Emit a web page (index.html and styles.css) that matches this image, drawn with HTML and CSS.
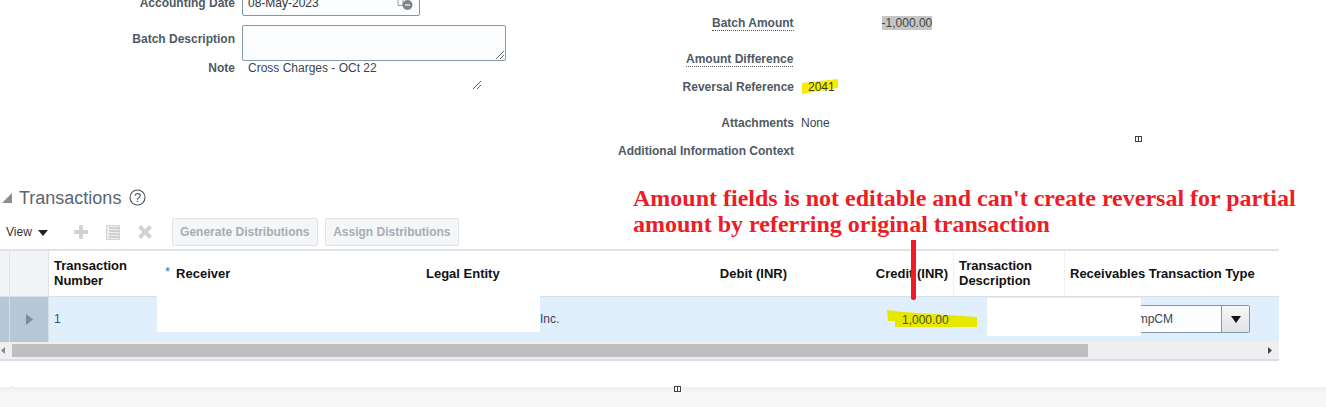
FILE: index.html
```html
<!DOCTYPE html>
<html lang="en">
<head>
<meta charset="utf-8">
<title>Transactions</title>
<link rel="stylesheet" href="styles.css">
</head>
<body>
<main class="page">
  <section class="form">
    <div class="col-left">
      <div class="row row-date">
        <span class="label">Accounting Date</span>
        <div class="date-input">
          <span>08-May-2023</span>
          <svg class="cal" width="18" height="14" viewBox="0 0 18 14"><path d="M1 1.5h5v7H1z" fill="none" stroke="#9a9a9a"/><path d="M3 0v3" stroke="#777"/><circle cx="10.5" cy="8" r="5" fill="#7d858b"/><path d="M8 8h5" stroke="#fff" stroke-width="1.2"/></svg>
        </div>
      </div>
      <div class="row row-desc">
        <span class="label">Batch Description</span>
        <div class="textarea"><svg class="grip" width="8" height="8" viewBox="0 0 8 8"><path d="M0 8L8 0M4 8L8 4" stroke="#666" fill="none"/></svg></div>
      </div>
      <div class="row row-note">
        <span class="label">Note</span>
        <div class="note">Cross Charges - OCt 22<svg class="grip-note" width="8" height="8" viewBox="0 0 8 8"><path d="M0 8L8 0M4 8L8 4" stroke="#666" fill="none"/></svg></div>
      </div>
    </div>
    <div class="col-right">
      <div class="row r-amount"><span class="label rlabel dotted">Batch Amount</span><span class="amount-value">-1,000.00</span></div>
      <div class="row r-diff"><span class="label rlabel dotted">Amount Difference</span></div>
      <div class="row r-rev"><span class="label rlabel">Reversal Reference</span><span class="value rev-value">2041</span></div>
      <div class="row r-att"><span class="label rlabel">Attachments</span><span class="value">None</span></div>
      <div class="row r-add"><span class="label rlabel">Additional Information Context</span></div>
    </div>
  </section>

  <section class="transactions">
    <header class="section-head">
      <svg class="tri" width="10" height="10" viewBox="0 0 10 10"><path d="M0 10L10 0V10Z" fill="#8a8f94"/></svg>
      <h2>Transactions</h2>
      <svg class="help" width="17" height="17" viewBox="0 0 17 17"><circle cx="8.5" cy="8.5" r="7.5" fill="none" stroke="#4a5560" stroke-width="1.1"/><text x="8.5" y="13" text-anchor="middle" class="help-q">?</text></svg>
    </header>
    <div class="toolbar">
      <span class="view">View</span>
      <svg class="caret" width="10" height="6" viewBox="0 0 10 6"><path d="M0 0H10L5 6Z" fill="#222"/></svg>
      <svg class="tool t-add" width="14" height="14" viewBox="0 0 14 14"><path d="M5 0h4v5h5v4H9v5H5V9H0V5h5z" fill="#d0d3d6"/></svg>
      <svg class="tool t-doc" width="14" height="15" viewBox="0 0 14 15"><path d="M.5.5h13v14H.5z" fill="#eceeef" stroke="#d0d3d6"/><path d="M3 3h10M3 6h10M3 9h10M3 12h10" stroke="#c4c7ca" stroke-width="1.5"/></svg>
      <svg class="tool t-del" width="14" height="14" viewBox="0 0 14 14"><path d="M1.5 1.5l11 11M12.5 1.5l-11 11" stroke="#d0d3d6" stroke-width="4"/></svg>
      <button class="btn btn-gen" type="button">Generate Distributions</button>
      <button class="btn btn-assign" type="button">Assign Distributions</button>
    </div>
    <div class="table">
      <div class="grid head">
        <div class="gut"></div>
        <div class="sel"></div>
        <div class="th two">Transaction<br>Number</div>
        <div class="th"><span class="req">*</span>Receiver</div>
        <div class="th">Legal Entity</div>
        <div class="th end">Debit (INR)</div>
        <div class="th end">Credit (INR)</div>
        <div class="th two sep">Transaction<br>Description</div>
        <div class="th sep">Receivables Transaction Type</div>
      </div>
      <div class="grid body">
        <div class="gut dark"></div>
        <div class="sel dark"><svg width="7" height="11" viewBox="0 0 7 11"><path d="M0 0L7 5.5L0 11Z" fill="#858a8f"/></svg></div>
        <div class="td link">1</div>
        <div class="td"></div>
        <div class="td inc">Inc.</div>
        <div class="td"></div>
        <div class="td end credit">1,000.00</div>
        <div class="td"></div>
        <div class="td combo-cell">
          <div class="combo"><span class="combo-text">mpCM</span><span class="combo-btn"><svg width="10" height="7" viewBox="0 0 10 7"><path d="M0 0H10L5 7Z" fill="#111"/></svg></span></div>
        </div>
      </div>
      <div class="scrollbar">
        <svg class="arrow" width="4" height="7" viewBox="0 0 4 7"><path d="M4 0V7L0 3.5Z" fill="#888"/></svg>
        <div class="thumb"></div>
        <svg class="arrow" width="4" height="7" viewBox="0 0 4 7"><path d="M0 0V7L4 3.5Z" fill="#444"/></svg>
      </div>
    </div>
  </section>

  <section class="next">
    <svg class="tri" width="10" height="10" viewBox="0 0 10 10"><path d="M0 10L10 0V10Z" fill="#8a8f94"/></svg>
    <h2>Transaction Distributions</h2>
  </section>
  <footer class="footer"></footer>

  <div class="mark handle-a"></div>
  <div class="mark handle-b"></div>
  <svg class="hl hl-rev" width="38" height="15" viewBox="0 0 38 15"><path d="M1 4L37 0V9L1 15Z" fill="#f8ec00"/></svg>
  <svg class="hl hl-credit" width="91" height="17" viewBox="0 0 91 17"><path d="M0 0L16 2L90 7V17H8V11H1Z" fill="#e6e800"/></svg>
  <span class="credit-top">1,000.00</span>
  <span class="rev-top">2041</span>
  <div class="patch patch-a"></div>
  <div class="patch patch-b"></div>
  <div class="red-line"></div>
  <p class="callout">Amount fields is not editable and can't create reversal for partial<br>amount by referring original transaction</p>
</main>
</body>
</html>
```
FILE: styles.css
```css
* { box-sizing: border-box; }
html, body { margin: 0; padding: 0; }
body { background: #fff; font-family: "Liberation Sans", Arial, sans-serif; font-size: 12px; color: #333; overflow: hidden; }
.page { position: relative; width: 1326px; height: 407px; overflow: hidden; }

.form { height: 187px; display: flex; overflow: hidden; }
.col-left { width: 600px; flex: none; margin-top: -12px; }
.col-right { flex: 1; }
.row { display: flex; align-items: flex-start; }
.label { font-weight: 700; color: #4f5a64; text-align: right; flex: none; line-height: 14px; }
.col-left .label { width: 235px; margin-right: 7px; }
.row-date { height: 37px; align-items: flex-start; }
.row-date .label { padding-top: 8px; }
.date-input { width: 178px; height: 28px; border: 1px solid #8198a6; border-radius: 2px; background: #fbfdff; display: flex; align-items: center; justify-content: space-between; padding: 0 0 0 5px; }
.date-input span { position: relative; top: 1px; }
.cal { margin: 4px 4px 0 0; }
.row-desc { height: 36px; }
.row-desc .label { padding-top: 7px; }
.textarea { position: relative; width: 264px; height: 36px; border: 1px solid #8198a6; border-radius: 2px; background: #fbfdff; }
.grip { position: absolute; right: 1px; bottom: 1px; }
.note { position: relative; padding-left: 6px; width: 240px; height: 28px; color: #3a4550; line-height: 14px; }
.grip-note { position: absolute; right: 1px; bottom: 0; }

.rlabel { width: 194px; margin-right: 7px; }
.dotted { width: auto; margin-right: 0; border-bottom: 1px dotted #555; }
.r-amount { margin-top: 16px; height: 36px; }
.r-amount .dotted { margin-left: 112px; }
.amount-value { margin-left: 88px; background: #c6c6c6; line-height: 14px; color: #444; }
.r-diff { height: 28px; }
.r-diff .dotted { margin-left: 86px; }
.r-rev { height: 36px; }
.r-att { height: 28px; }
.r-add { height: 14px; }
.value { color: #3a4550; line-height: 14px; }
.rev-value { visibility: hidden; }

.section-head { height: 31px; display: flex; align-items: center; padding: 0 0 10px 2px; }
.section-head .tri { margin-right: 7px; }
h2 { margin: 0; font-size: 18px; font-weight: 400; color: #5a6670; line-height: 22px; }
.help { margin-left: 8px; }
.help-q { font: 13px "Liberation Sans", sans-serif; fill: #4a5560; }

.toolbar { height: 31px; display: flex; align-items: flex-start; }
.view { margin: 7px 0 0 6px; color: #333; line-height: 14px; }
.caret { margin: 12px 0 0 6px; }
.t-add { margin: 7px 0 0 26px; }
.t-doc { margin: 7px 0 0 18px; }
.t-del { margin: 7px 0 0 18px; }
.btn { height: 28px; padding: 0; background: #f5f6f7; border: 1px solid #dfe3e6; border-radius: 2px; font: 700 12px "Liberation Sans", sans-serif; color: #a6adb3; white-space: nowrap; }
.btn-gen { width: 146px; margin: 0 7px 0 20px; }
.btn-assign { width: 134px; }

.table { width: 1279px; border-top: 2px solid #dde3ea; border-bottom: 2px solid #d5dfe9; }
.grid { display: grid; grid-template-columns: 10px 39px 111px 261px 176px 195px 161px 111px 215px; }
.head { height: 46px; border-bottom: 1px solid #d9e1e8; }
.gut, .sel { background: #f3f4f6; border-right: 1px solid #e0e4e8; }
.sel { display: flex; align-items: center; justify-content: center; }
.gut.dark, .sel.dark { background: #b5c8d8; border-right-color: #d6e0e8; }
.th { font-weight: 700; font-size: 13px; color: #111; line-height: 15px; padding: 15px 5px 0; white-space: nowrap; }
.th.two { padding-top: 7px; }
.th.end { text-align: right; }
.sep { border-left: 1px solid #eef1f4; }
.req { color: #1a7bbd; font-weight: 400; position: relative; top: -2px; margin-right: 6px; }
.body { height: 45px; background: #e1effd; }
.td { padding: 15px 5px 0; line-height: 14px; color: #3a4550; }
.link { color: #145c86; }
.inc { padding: 15px 0 0 119px; }
.end { text-align: right; }
.credit { visibility: hidden; }
.combo-cell { padding: 8px 0 0; }
.combo { width: 187px; height: 28px; display: flex; border: 1px solid #8198a6; border-radius: 2px; background: #fbfdff; margin-left: -1px; }
.combo-text { flex: 1; padding: 6px 48px 0 0; text-align: right; color: #3a4550; }
.combo-btn { width: 28px; background: linear-gradient(#f6f7f8, #dfe3e6); border-left: 1px solid #8198a6; display: flex; align-items: center; justify-content: center; }

.scrollbar { height: 17px; background: #efefef; display: flex; align-items: center; padding: 0 7px 0 1px; }
.thumb { width: 1076px; height: 13px; background: #bfbfbf; margin: 0 auto 0 7px; }

.next { height: 4px; display: flex; align-items: flex-start; padding: 22px 0 0 2px; overflow: visible; }
.next .tri { margin: 3px 7px 0 0; }
.footer { position: absolute; left: 0; right: 0; top: 387px; height: 20px; background: linear-gradient(#efefef, #f6f6f6 5px); }

.mark { position: absolute; width: 7px; height: 6px; border: 1px solid #444; background: linear-gradient(90deg, #fff 33%, #444 33%, #444 55%, #fff 55%); }
.handle-a { left: 1135px; top: 136px; }
.handle-b { left: 674px; top: 386px; }
.hl { position: absolute; }
.hl-rev { left: 801px; top: 79px; }
.hl-credit { left: 887px; top: 310px; }
.credit-top { position: absolute; left: 902px; top: 313px; line-height: 14px; color: #4a5020; }
.rev-top { position: absolute; left: 808px; top: 80px; line-height: 14px; color: #3a4020; }
.patch { position: absolute; background: #fff; }
.patch-a { left: 157px; top: 296px; width: 383px; height: 36px; }
.patch-b { left: 987px; top: 298px; width: 154px; height: 38px; }
.red-line { position: absolute; left: 911px; top: 240px; width: 5px; height: 60px; background: #ee1c25; border-radius: 0 0 2px 2px; }
.callout { position: absolute; left: 633px; top: 185px; margin: 0; font: 700 24px/26px "Liberation Serif", serif; color: #ee1c25; white-space: nowrap; }
```
